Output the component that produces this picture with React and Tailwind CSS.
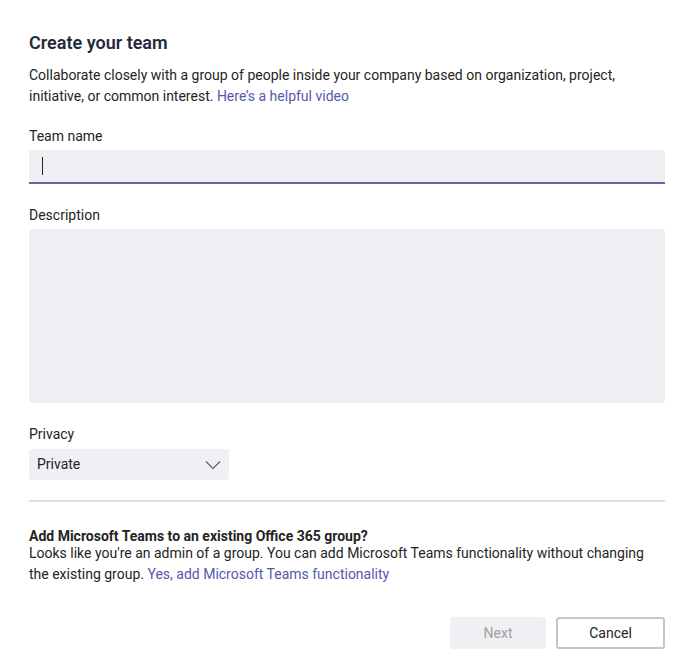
import React from "react";

export default function App() {
  const t = "text-[14px]";
  return (
    <div className="w-[683px] h-[657px] bg-white text-[#252423] font-['Roboto',sans-serif] px-[29px] pt-[31px] overflow-hidden">
      <h1 className="text-[18px] leading-[24px] font-semibold text-[#242a3c]">Create your team</h1>
      <p className={`mt-[10px] leading-[21px] ${t}`}>
        Collaborate closely with a group of people inside your company based on organization, project,
        <br />
        initiative, or common interest. <span className="text-[#5558af]">Here’s a helpful video</span>
      </p>

      <div className={`mt-[20px] leading-[18px] ${t}`}>Team name</div>
      <div className="mt-[5px] w-[636px] h-[34px] bg-[#eef0f4] border-b-2 border-[#6264a7] rounded-t-[3px] flex items-center px-[13px]">
        <div className="w-[1px] h-[18px] bg-[#252423]"></div>
      </div>

      <div className={`mt-[22px] leading-[18px] ${t}`}>Description</div>
      <div className="mt-[5px] w-[636px] h-[174px] bg-[#eef0f4] rounded-[3px]"></div>

      <div className={`mt-[22px] leading-[18px] ${t}`}>Privacy</div>
      <div className={`mt-[6px] w-[200px] h-[31px] bg-[#eef0f4] rounded-[3px] flex items-center justify-between pl-[8px] pr-[8px] ${t}`}>
        <span>Private</span>
        <svg width="16" height="10" viewBox="0 0 16 10" fill="none" stroke="#605e5c" strokeWidth="1.1">
          <path d="M1 1.5 L8 8.5 L15 1.5" />
        </svg>
      </div>

      <div className="mt-[20px] w-[636px] h-[2px] bg-[#e1dfdd]"></div>

      <div className={`mt-[25px] leading-[18px] font-bold ${t}`}>Add Microsoft Teams to an existing Office 365 group?</div>
      <p className={`-mt-[2px] leading-[21px] ${t}`}>
        Looks like you're an admin of a group. You can add Microsoft Teams functionality without changing
        <br />
        the existing group. <span className="text-[#5558af]">Yes, add Microsoft Teams functionality</span>
      </p>

      <div className="mt-[32px] w-[636px] flex justify-end gap-[10px]">
        <button className={`w-[96px] h-[32px] bg-[#eef0f4] rounded-[3px] text-[#a19f9d] ${t}`}>Next</button>
        <button className={`w-[109px] h-[32px] bg-white border-2 border-[#c8c6c4] rounded-[3px] text-[#252423] ${t}`}>Cancel</button>
      </div>
    </div>
  );
}
